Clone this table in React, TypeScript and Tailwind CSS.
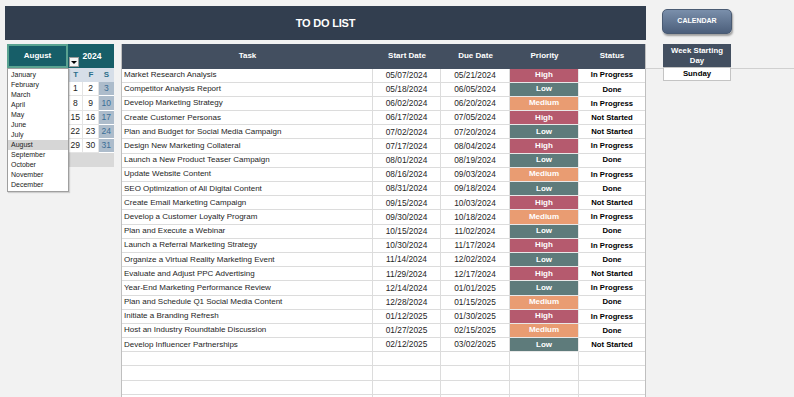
import React from "react";

type Row = [string, string, string, "High" | "Low" | "Medium", string];

const rows: Row[] = [
  ["Market Research Analysis", "05/07/2024", "05/21/2024", "High", "In Progress"],
  ["Competitor Analysis Report", "05/18/2024", "06/05/2024", "Low", "Done"],
  ["Develop Marketing Strategy", "06/02/2024", "06/20/2024", "Medium", "In Progress"],
  ["Create Customer Personas", "06/17/2024", "07/05/2024", "High", "Not Started"],
  ["Plan and Budget for Social Media Campaign", "07/02/2024", "07/20/2024", "Low", "Not Started"],
  ["Design New Marketing Collateral", "07/17/2024", "08/04/2024", "High", "In Progress"],
  ["Launch a New Product Teaser Campaign", "08/01/2024", "08/19/2024", "Low", "Done"],
  ["Update Website Content", "08/16/2024", "09/03/2024", "Medium", "In Progress"],
  ["SEO Optimization of All Digital Content", "08/31/2024", "09/18/2024", "Low", "Done"],
  ["Create Email Marketing Campaign", "09/15/2024", "10/03/2024", "High", "Not Started"],
  ["Develop a Customer Loyalty Program", "09/30/2024", "10/18/2024", "Medium", "In Progress"],
  ["Plan and Execute a Webinar", "10/15/2024", "11/02/2024", "Low", "Done"],
  ["Launch a Referral Marketing Strategy", "10/30/2024", "11/17/2024", "High", "In Progress"],
  ["Organize a Virtual Reality Marketing Event", "11/14/2024", "12/02/2024", "Low", "Done"],
  ["Evaluate and Adjust PPC Advertising", "11/29/2024", "12/17/2024", "High", "Not Started"],
  ["Year-End Marketing Performance Review", "12/14/2024", "01/01/2025", "Low", "In Progress"],
  ["Plan and Schedule Q1 Social Media Content", "12/28/2024", "01/15/2025", "Medium", "Done"],
  ["Initiate a Branding Refresh", "01/12/2025", "01/30/2025", "High", "In Progress"],
  ["Host an Industry Roundtable Discussion", "01/27/2025", "02/15/2025", "Medium", "Done"],
  ["Develop Influencer Partnerships", "02/12/2025", "03/02/2025", "Low", "Not Started"],
];

const priorityBg = {
  High: "bg-[#b55a6e]",
  Low: "bg-[#5e7b7b]",
  Medium: "bg-[#e99c72]",
};

const months = [
  "January", "February", "March", "April", "May", "June",
  "July", "August", "September", "October", "November", "December",
];

// August 2024, weeks starting Sunday; Sun-Wed sit under the month list
const weeks: (number | null)[][] = [
  [null, null, null, null, 1, 2, 3],
  [null, null, null, null, 8, 9, 10],
  [null, null, null, null, 15, 16, 17],
  [null, null, null, null, 22, 23, 24],
  [null, null, null, null, 29, 30, 31],
];

function CalendarPanel() {
  return (
    <div className="relative w-[116px] pl-[2px]">
      <div className="flex h-[24px] w-[107px]">
        <div className="flex w-[61px] items-center justify-center border-2 border-[#5aa391] bg-[#175e68] text-[8px] font-bold text-white">
          August
        </div>
        <div className="flex flex-1 items-center justify-center bg-[#175e68] pl-[2px] text-[8.5px] font-bold text-white">
          2024
        </div>
      </div>
      <div className="w-[107px]">
        <div className="grid h-[14.2px] grid-cols-7 bg-[#d6dee8]">
          {["", "", "", "", "T", "F", "S"].map((d, i) => (
            <div key={i} className="flex items-center justify-center text-[8px] font-bold text-[#2e6e8a]">
              {d}
            </div>
          ))}
        </div>
        {weeks.map((w, wi) => (
          <div key={wi} className="grid h-[14.2px] grid-cols-7">
            {w.map((d, di) => (
              <div
                key={di}
                className={
                  di === 6
                    ? "flex items-center justify-center border-b border-white bg-[#adbccb] text-[8.5px] text-[#3a6e96]"
                    : "flex items-center justify-center border-b border-r border-[#e4e4e4] bg-white text-[8.5px] text-[#222]"
                }
              >
                {d ?? ""}
              </div>
            ))}
          </div>
        ))}
        <div className="h-[14.2px] bg-[#d9d9d9]" />
      </div>

      {/* dropdown button */}
      <div className="absolute left-[64px] top-[13px] flex h-[10px] w-[10px] items-center justify-center border border-[#9a9a9a] bg-[#f4f4f4]">
        <div className="h-0 w-0 border-l-[3px] border-r-[3px] border-t-[3px] border-l-transparent border-r-transparent border-t-black" />
      </div>

      {/* month list */}
      <div className="absolute left-[2px] top-[24px] w-[62px] border border-[#9f9f9f] bg-white py-[1px] shadow-[1px_1px_1px_rgba(0,0,0,0.15)]">
        {months.map((m) => (
          <div
            key={m}
            className={
              m === "August"
                ? "flex h-[10px] items-center bg-[#d6d6d6] pl-[3px] text-[7px] text-[#222]"
                : "flex h-[10px] items-center pl-[3px] text-[7px] text-[#222]"
            }
          >
            {m}
          </div>
        ))}
      </div>
    </div>
  );
}

function TaskTable() {
  const empty = 4;
  return (
    <div className="h-[360px] w-[525px] border-l border-r border-[#bfbfbf] bg-white">
      <div className="grid h-[24.5px] grid-cols-[251px_68px_69px_69px_66px] bg-[#434f60] text-[8px] font-bold text-white">
        <div className="flex items-center justify-center">Task</div>
        <div className="flex items-center justify-center">Start Date</div>
        <div className="flex items-center justify-center">Due Date</div>
        <div className="flex items-center justify-center">Priority</div>
        <div className="flex items-center justify-center">Status</div>
      </div>
      {rows.map(([task, start, due, pr, status]) => (
        <div key={task} className="grid h-[14.2px] grid-cols-[251px_68px_69px_69px_66px] text-[#1e1e1e]">
          <div className="flex items-center border-b border-r border-[#dcdcdc] pl-[2px] text-[8px]">{task}</div>
          <div className="flex items-center justify-center border-b border-r border-[#dcdcdc] text-[8.3px]">{start}</div>
          <div className="flex items-center justify-center border-b border-r border-[#dcdcdc] text-[8.3px]">{due}</div>
          <div
            className={`flex items-center justify-center border-b border-r border-[#e8e8e8] text-[8px] font-bold text-white ${priorityBg[pr]}`}
          >
            {pr}
          </div>
          <div className="flex items-center justify-center border-b border-[#dcdcdc] text-[7.7px] font-bold text-black">
            {status}
          </div>
        </div>
      ))}
      {Array.from({ length: empty }).map((_, i) => (
        <div key={i} className="grid h-[14.2px] grid-cols-[251px_68px_69px_69px_66px]">
          <div className="border-b border-r border-[#dcdcdc]" />
          <div className="border-b border-r border-[#dcdcdc]" />
          <div className="border-b border-r border-[#dcdcdc]" />
          <div className="border-b border-r border-[#dcdcdc]" />
          <div className="border-b border-[#dcdcdc]" />
        </div>
      ))}
    </div>
  );
}

export default function App() {
  return (
    <div className="relative h-[397px] w-[794px] overflow-hidden bg-[#f2f2f2] font-['Liberation_Sans',Arial,sans-serif]">
      {/* sheet gridline to the right of the table */}
      <div className="absolute left-[646px] right-0 top-[68px] h-px bg-[#d0d0d0]" />
      <div className="relative flex pl-[5px] pt-[6px]">
        <div className="w-[641px]">
          <div className="flex h-[34px] items-center justify-center bg-[#323e4f] text-[11px] font-bold tracking-[-0.2px] text-white">
            TO DO LIST
          </div>
          <div className="mt-[4px] flex">
            <CalendarPanel />
            <TaskTable />
          </div>
        </div>
        <div className="ml-[16px] w-[70px] pt-[3px]">
          <button className="flex h-[25px] w-[70px] items-center justify-center rounded-[5px] border border-[#4a5b73] bg-gradient-to-b from-[#7a8fab] to-[#4c5f7b] text-[7px] font-bold text-white shadow-[1px_2px_2px_rgba(0,0,0,0.35)]">
            CALENDAR
          </button>
          <div className="ml-[1px] mt-[10px] w-[68px]">
            <div className="flex h-[23px] flex-col items-center justify-center bg-[#434f60] text-[7.8px] font-bold leading-[10px] text-white">
              <span>Week Starting</span>
              <span>Day</span>
            </div>
            <div className="flex h-[14px] items-center justify-center border border-[#c4c4c4] bg-white text-[7.8px] font-bold text-black">
              Sunday
            </div>
          </div>
        </div>
      </div>
    </div>
  );
}
